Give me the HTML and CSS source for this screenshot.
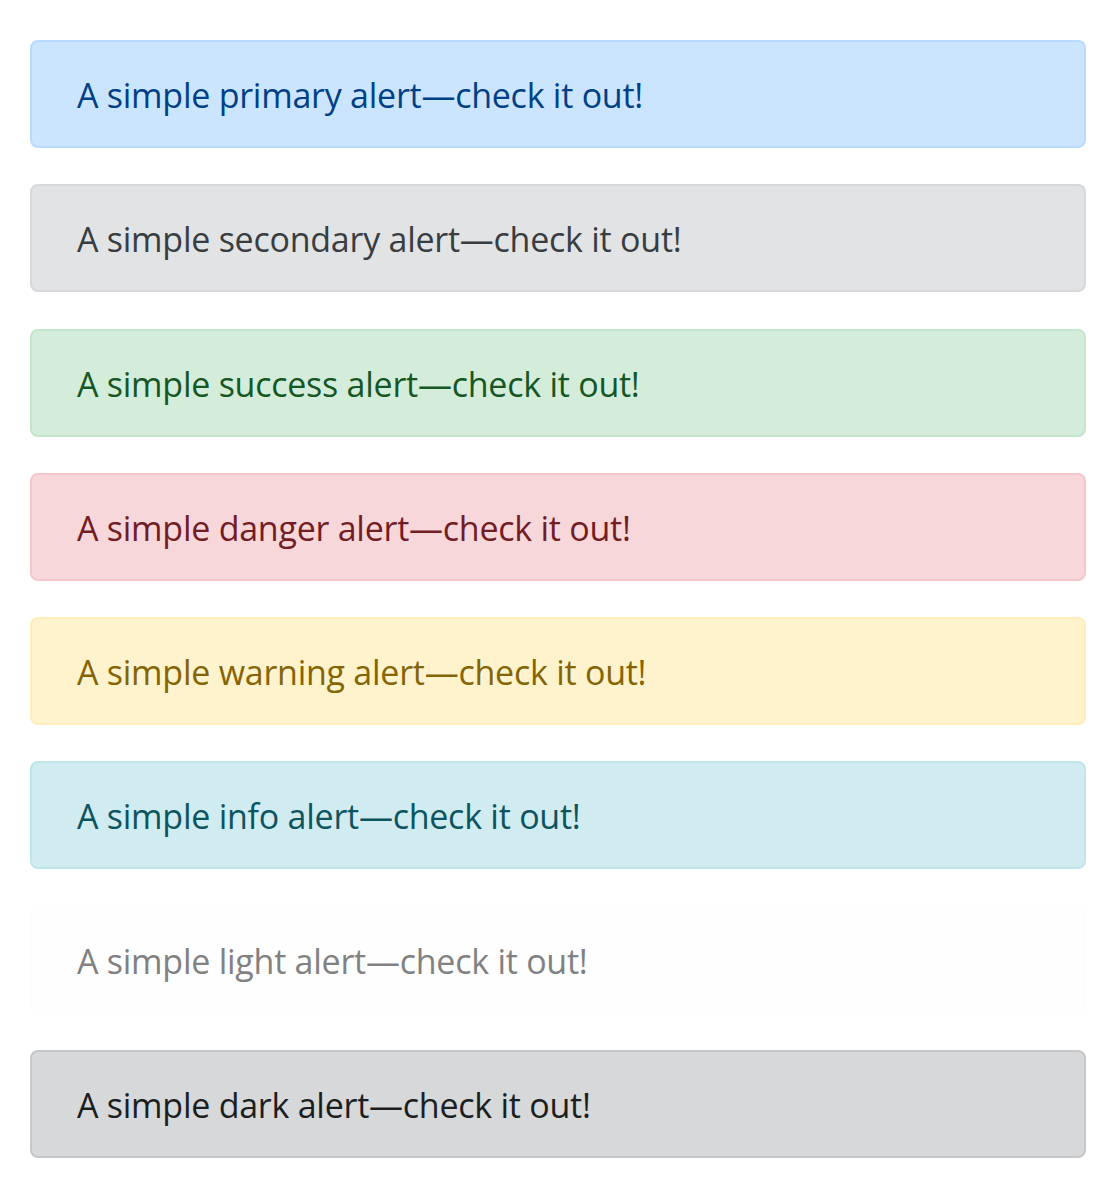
FILE: index.html
```html
<!DOCTYPE html>
<html lang="en">
<head>
    <meta charset="UTF-8">
    <title>Alerts</title>
    <link rel="stylesheet" href="styles.css">
</head>
<body>
    <div class="alerts">
        <div class="alert alert-primary">A simple primary alert—check it out!</div>
        <div class="alert alert-secondary">A simple secondary alert—check it out!</div>
        <div class="alert alert-success">A simple success alert—check it out!</div>
        <div class="alert alert-danger">A simple danger alert—check it out!</div>
        <div class="alert alert-warning">A simple warning alert—check it out!</div>
        <div class="alert alert-info">A simple info alert—check it out!</div>
        <div class="alert alert-light">A simple light alert—check it out!</div>
        <div class="alert alert-dark">A simple dark alert—check it out!</div>
    </div>
</body>
</html>
```

FILE: styles.css
```css
body {
    margin: 0;
    padding: 40px 23px 0 30px;
    font-family: "Open Sans", "Noto Sans", sans-serif;
    background-color: #fff;
}

.alerts {
    display: flex;
    flex-direction: column;
    gap: 36.3px;
}

.alert {
    padding: 26px 45px 24px;
    border: 2px solid transparent;
    border-radius: 8px;
    font-size: 34px;
    line-height: 54px;
    letter-spacing: -0.25px;
}

.alert-primary {
    color: #004085;
    background-color: #cce5ff;
    border-color: #b8daff;
}

.alert-secondary {
    color: #383d41;
    background-color: #e2e3e5;
    border-color: #d6d8db;
}

.alert-success {
    color: #155724;
    background-color: #d4edda;
    border-color: #c3e6cb;
}

.alert-danger {
    color: #721c24;
    background-color: #f8d7da;
    border-color: #f5c6cb;
}

.alert-warning {
    color: #856404;
    background-color: #fff3cd;
    border-color: #ffeeba;
}

.alert-info {
    color: #0c5460;
    background-color: #d1ecf1;
    border-color: #bee5eb;
}

.alert-light {
    color: #818182;
    background-color: #fefefe;
    border-color: #fdfdfe;
}

.alert-dark {
    color: #1b1e21;
    background-color: #d6d8d9;
    border-color: #c6c8ca;
}
```
